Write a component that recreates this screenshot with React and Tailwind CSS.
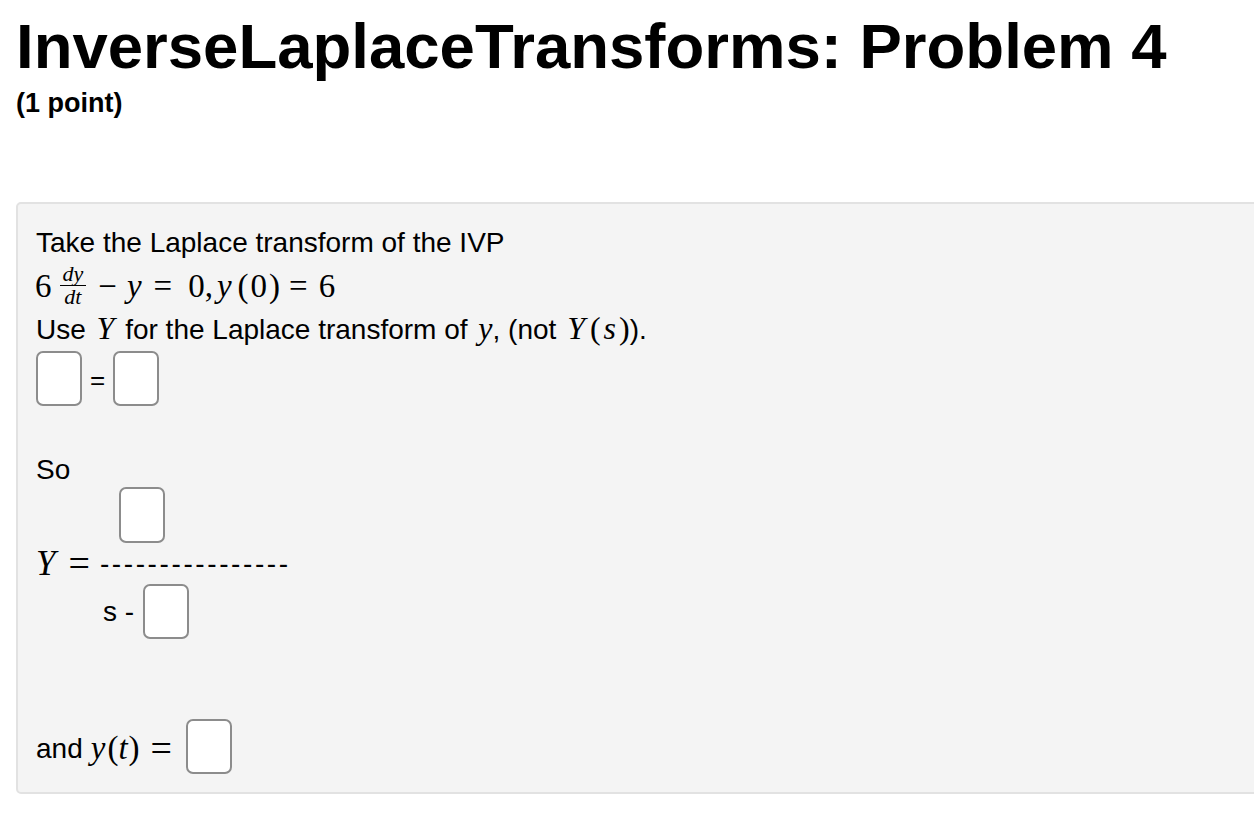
import React from "react";

const Box = ({ cls = "" }) => (
  <span
    className={`inline-block w-[46px] h-[55px] shrink-0 bg-white border-2 border-[#8c8c8c] rounded-[7px] ${cls}`}
  />
);

export default function App() {
  return (
    <div className="w-full min-h-[820px] overflow-hidden bg-white text-black font-['Liberation_Sans',Arial,sans-serif]">
      <h1 className="pl-4 pt-[15px] text-[63.5px] font-bold leading-none">
        InverseLaplaceTransforms: Problem 4
      </h1>
      <div className="pl-4 mt-[9px] text-[27px] font-bold leading-[30px]">(1 point)</div>

      <div className="ml-4 mt-[84px] w-[1300px] bg-[#f4f4f4] border-2 border-[#e2e2e2] rounded-[5px] pl-[18px] pt-[24px] pb-[18px] text-[28px] leading-[30px]">
        <div className="whitespace-nowrap">Take the Laplace transform of the IVP</div>

        <div className="mt-[9px] h-[40px] flex items-center font-['Liberation_Serif',serif] text-[33px] leading-none">
          <span className="-ml-[1px]">6</span>
          <span className="ml-[8px] inline-flex flex-col items-stretch italic text-[22px]">
            <span className="h-[16px] leading-[10px] px-[3px] text-center">dy</span>
            <span className="h-[1px] bg-black" />
            <span className="h-[18px] leading-[22px] px-[3px] text-center">dt</span>
          </span>
          <span className="ml-[12px]">−</span>
          <span className="ml-[10px] italic">y</span>
          <span className="ml-[12px]">=</span>
          <span className="ml-[16px]">0,</span>
          <span className="ml-[4px] italic">y</span>
          <span className="ml-[6px]">(</span>
          <span className="ml-[2px]">0</span>
          <span className="ml-[2px]">)</span>
          <span className="ml-[9px]">=</span>
          <span className="ml-[11px]">6</span>
        </div>

        <div className="mt-[6px] whitespace-nowrap">
          Use{" "}
          <span className="mx-[3px] font-['Liberation_Serif',serif] italic text-[32px] leading-[30px]">Y</span> for the
          Laplace transform of{" "}
          <span className="ml-[3px] font-['Liberation_Serif',serif] italic text-[32px] leading-[30px]">y</span>, (not{" "}
          <span className="ml-[3px] font-['Liberation_Serif',serif] text-[32px] leading-[30px]">
            <span className="italic">Y</span>
            <span className="ml-[5px]">(</span>
            <span className="mx-[3px] italic">s</span>)
          </span>
          ).
        </div>

        <div className="mt-[6px] h-[55px] flex items-center">
          <Box />
          <span className="mx-[8px] leading-none text-[26px] pt-[4px]">=</span>
          <Box />
        </div>

        <div className="mt-[49px]">So</div>

        <div className="mt-[2px] ml-[83px] h-[56px] flex">
          <Box cls="h-[56px]" />
        </div>

        <div className="h-[41px] flex items-center">
          <span className="font-['Liberation_Serif',serif] italic text-[35px] leading-none">Y</span>
          <span className="ml-[13px] font-['Liberation_Serif',serif] text-[38px] leading-none">=</span>
          <span className="ml-[10px] leading-none tracking-[2.6px] text-[28px] pt-[1px]">----------------</span>
        </div>

        <div className="ml-[67px] h-[55px] flex items-center">
          <span className="leading-none pt-[2px]">s -</span>
          <Box cls="ml-[9px]" />
        </div>

        <div className="mt-[80px] h-[55px] flex items-center">
          <span className="leading-none pt-[6px]">and</span>
          <span className="ml-[8px] font-['Liberation_Serif',serif] text-[33px] leading-none pt-[4px]">
            <span className="italic">y</span>
            <span className="ml-[2px]">(</span>
            <span className="italic">t</span>
            <span className="ml-[1px]">)</span>
          </span>
          <span className="ml-[11px] font-['Liberation_Serif',serif] text-[38px] leading-none pt-[4px]">=</span>
          <Box cls="ml-[14px]" />
        </div>
      </div>
    </div>
  );
}
